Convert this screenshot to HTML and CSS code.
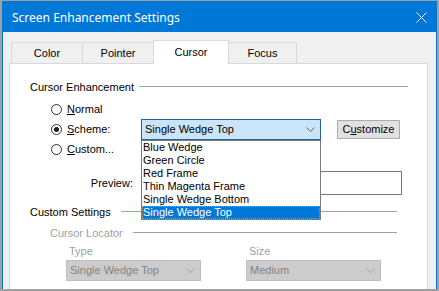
FILE: index.html
```html
<!DOCTYPE html>
<html>
<head>
<meta charset="utf-8">
<link rel="stylesheet" href="styles.css">
</head>
<body>
<div class="window">
  <div class="titlebar">
    <span class="title">Screen Enhancement Settings</span>
    <svg class="close" width="11" height="11" viewBox="0 0 11 11"><path d="M0.5 0.5 L10.5 10.5 M10.5 0.5 L0.5 10.5" stroke="#fff" stroke-width="1" fill="none"/></svg>
  </div>
  <div class="tabs">
    <div class="tab tab-color">Color</div>
    <div class="tab tab-pointer">Pointer</div>
    <div class="tab tab-cursor active">Cursor</div>
    <div class="tab tab-focus">Focus</div>
  </div>
  <div class="panel">
    <div class="group-head head-enh"><span class="head-label">Cursor Enhancement</span><i class="rule"></i></div>
    <div class="options">
      <div class="opt opt-normal"><span class="radio"></span><span class="opt-text"><u>N</u>ormal</span></div>
      <div class="opt opt-scheme">
        <div class="opt-label"><span class="radio checked"></span><span class="opt-text"><u>S</u>cheme:</span></div>
        <div class="combo-wrap">
          <div class="combo combo-focus"><span class="combo-text">Single Wedge Top</span><svg class="chev" width="9" height="5" viewBox="0 0 9 5"><path d="M0.5 0.5 L4.5 4.5 L8.5 0.5" stroke="#606060" fill="none"/></svg></div>
          <ul class="listbox">
            <li>Blue Wedge</li>
            <li>Green Circle</li>
            <li>Red Frame</li>
            <li>Thin Magenta Frame</li>
            <li>Single Wedge Bottom</li>
            <li class="sel">Single Wedge Top</li>
          </ul>
        </div>
        <div class="btn">C<u>u</u>stomize</div>
      </div>
      <div class="opt opt-custom"><span class="radio"></span><span class="opt-text"><u>C</u>ustom...</span></div>
    </div>
    <div class="preview-row"><span class="preview-label">Preview:</span><div class="preview-box"></div></div>
    <div class="group-head head-custom"><span class="head-label">Custom Settings</span><i class="rule"></i></div>
    <div class="group-head head-locator disabled"><span class="head-label">Cursor Locator</span><i class="rule"></i></div>
    <div class="fields">
      <div class="field">
        <span class="field-label">Type</span>
        <div class="combo combo-disabled"><span class="combo-text">Single Wedge Top</span><svg class="chev" width="9" height="5" viewBox="0 0 9 5"><path d="M0.5 0.5 L4.5 4.5 L8.5 0.5" stroke="#a6a6a6" fill="none"/></svg></div>
      </div>
      <div class="field">
        <span class="field-label">Size</span>
        <div class="combo combo-disabled"><span class="combo-text">Medium</span><svg class="chev" width="9" height="5" viewBox="0 0 9 5"><path d="M0.5 0.5 L4.5 4.5 L8.5 0.5" stroke="#a6a6a6" fill="none"/></svg></div>
      </div>
    </div>
  </div>
</div>
</body>
</html>
```
FILE: styles.css
```css
* { box-sizing: border-box; }
html, body {
  margin: 0;
  padding: 0;
}
body {
  width: 439px;
  height: 291px;
  overflow: hidden;
  background: #a0a0a0;
  font-family: "Liberation Sans", Arial, sans-serif;
  font-size: 11px;
  color: #000;
}
.window {
  margin: 1px 0 0 2px;
  width: 435px;
  height: 288px;
  border-left: 1px solid #0078d7;
  border-right: 1px solid #0078d7;
  background: #f0f0f0;
  overflow: hidden;
}
.titlebar {
  height: 31px;
  background: #0078d7;
  display: flex;
  align-items: center;
  justify-content: space-between;
  padding: 0 9px 0 9px;
}
.title {
  font-family: "Noto Sans", "Open Sans", sans-serif;
  font-size: 12px;
  line-height: 31px;
  color: #fff;
  padding-top: 1px;
}
.close { display: block; margin-top: 1px; }

.tabs {
  display: flex;
  align-items: flex-end;
  height: 31px;
  padding: 8px 0 0 8px;
}
.tab {
  height: 21px;
  border: 1px solid #d9d9d9;
  border-bottom: none;
  background: #f0f0f0;
  text-align: center;
  line-height: 13px;
  padding-top: 4px;
  margin-left: -1px;
}
.tab-color { width: 72px; margin-left: 0; }
.tab-pointer { width: 72px; }
.tab-cursor { width: 76px; }
.tab-focus { width: 69px; }
.tab.active {
  height: 24px;
  background: #fff;
  padding-top: 5px;
  margin-bottom: -1px;
  position: relative;
  z-index: 1;
}

.panel {
  margin: 0 8px 0 6px;
  height: 240px;
  border: 1px solid #d9d9d9;
  background: #fff;
  padding-top: 17px;
}
.group-head {
  display: flex;
  height: 13px;
  line-height: 13px;
}
.head-label { flex: none; }
.rule {
  flex: 1;
  height: 1px;
  margin-top: 5px;
  background: #a0a0a0;
}
.head-enh { padding-left: 20px; margin-right: 19px; }
.head-enh .head-label { width: 109px; }
.head-custom { padding-left: 20px; margin-right: 30px; margin-top: 11px; }
.head-custom .head-label { width: 91px; }
.head-locator { padding-left: 40px; margin-right: 30px; margin-top: 8px; }
.head-locator .head-label { width: 83px; }
.disabled { color: #a0a0a0; }

.options {
  margin-top: 6px;
  padding-left: 41px;
}
.opt {
  display: flex;
  align-items: center;
}
.opt-normal { height: 19px; }
.opt-scheme { height: 21px; }
.opt-custom { height: 17px; margin-top: 1px; }
.opt-label {
  width: 90px;
  display: flex;
  align-items: center;
}
.radio {
  width: 11px;
  height: 11px;
  border: 1px solid #333;
  border-radius: 50%;
  background: #fff;
  position: relative;
  flex: none;
}
.radio.checked::after {
  content: "";
  position: absolute;
  left: 2px;
  top: 2px;
  width: 5px;
  height: 5px;
  border-radius: 50%;
  background: #1a1a1a;
}
.opt-text {
  margin-left: 5px;
  line-height: 13px;
}
u { text-underline-offset: 1px; }

.combo-wrap {
  position: relative;
  width: 180px;
}
.combo {
  height: 21px;
  display: flex;
  align-items: center;
  padding: 0 5px 0 3px;
  line-height: 13px;
}
.combo-text { flex: 1; white-space: nowrap; }
.chev { display: block; flex: none; }
.combo-focus {
  border: 1px solid #26609c;
  background: #cce4f7;
}
.listbox {
  position: absolute;
  left: 0;
  top: 21px;
  width: 180px;
  margin: 0;
  padding: 0;
  list-style: none;
  background: #fff;
  border: 1px solid #7a7a7a;
  z-index: 2;
}
.listbox li {
  height: 13px;
  line-height: 13px;
  padding-left: 1px;
  white-space: nowrap;
}
.listbox li.sel {
  background: #0078d7;
  color: #fff;
  outline: 1px dotted #f08a24;
  outline-offset: -1px;
}
.btn {
  margin-left: 16px;
  width: 63px;
  height: 19px;
  border: 1px solid #adadad;
  background: #e1e1e1;
  text-align: center;
  line-height: 16px;
}

.preview-row {
  display: flex;
  align-items: center;
  margin-top: 13px;
  padding-left: 41px;
}
.preview-label {
  width: 90px;
  text-align: right;
  padding-right: 8px;
  line-height: 13px;
}
.preview-box {
  width: 261px;
  height: 24px;
  border: 1px solid #7a7a7a;
  background: #fff;
}

.fields {
  display: grid;
  grid-template-columns: 135px 135px;
  column-gap: 45px;
  padding-left: 56px;
  margin-top: 5px;
}
.field {
  display: flex;
  flex-direction: column;
}
.field-label {
  color: #a0a0a0;
  line-height: 13px;
  height: 13px;
  padding-left: 3px;
  margin-bottom: 2px;
}
.combo-disabled {
  border: 1px solid #bfbfbf;
  background: #cccccc;
  color: #838383;
}
```
